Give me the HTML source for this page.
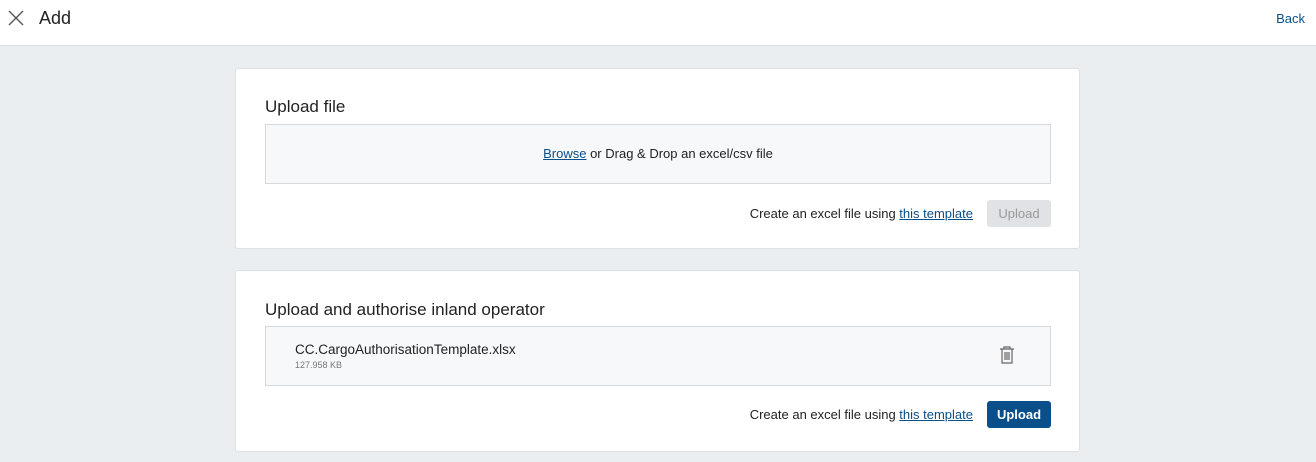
<!DOCTYPE html><html><head><style>
body{margin:0;width:1316px;height:462px;background:#ebeef1;font-family:"Liberation Sans",sans-serif;color:#222;position:relative;overflow:hidden}
.top{position:absolute;left:0;top:0;width:1316px;height:45px;background:#fff;border-bottom:1px solid #d9dde1}
.card{position:absolute;left:235px;width:843px;background:#fff;border:1px solid #dde1e5;border-radius:3px}
.h{position:absolute;left:29px;font-size:17px}
.box{position:absolute;left:29px;width:784px;height:58px;background:#f7f8fa;border:1px solid #d6dadf}
a{color:#0a4f8a}
.row{position:absolute;right:28px;font-size:13px;display:flex;align-items:center}
.btn{margin-left:14px;width:64px;height:27px;border-radius:3px;display:flex;align-items:center;justify-content:center;font-size:13px}
</style></head><body>
<div class="top">
<svg style="position:absolute;left:8px;top:10px" width="16" height="16"><path d="M1 1L15 15M15 1L1 15" stroke="#555" stroke-width="1.4"/></svg>
<div style="position:absolute;left:39px;top:8px;font-size:18px">Add</div>
<div style="position:absolute;right:11px;top:11px;font-size:13px;color:#0a4f8a">Back</div>
</div>
<div class="card" style="top:68px;height:179px">
<div class="h" style="top:28px">Upload file</div>
<div class="box" style="top:55px;text-align:center;line-height:58px;font-size:13px"><a href="#">Browse</a> or Drag &amp; Drop an excel/csv file</div>
<div class="row" style="top:131px">Create an excel file using&nbsp;<a href="#">this template</a><div class="btn" style="background:#e0e2e5;color:#999">Upload</div></div>
</div>
<div class="card" style="top:270px;height:180px">
<div class="h" style="top:29px">Upload and authorise inland operator</div>
<div class="box" style="top:55px">
<div style="position:absolute;left:29px;top:15px;font-size:13.5px">CC.CargoAuthorisationTemplate.xlsx</div>
<div style="position:absolute;left:29px;top:33px;font-size:9px;color:#777">127.958 KB</div>
<svg style="position:absolute;left:733px;top:19px" width="16" height="18"><path d="M1 3H15M5 3V1H11V3M3 3V17H13V3M6 6V14M8 6V14M10 6V14" stroke="#666" stroke-width="1.2" fill="none"/></svg>
</div>
<div class="row" style="top:130px">Create an excel file using&nbsp;<a href="#">this template</a><div class="btn" style="background:#0a4f8a;color:#fff;font-weight:bold">Upload</div></div>
</div>
</body></html>
